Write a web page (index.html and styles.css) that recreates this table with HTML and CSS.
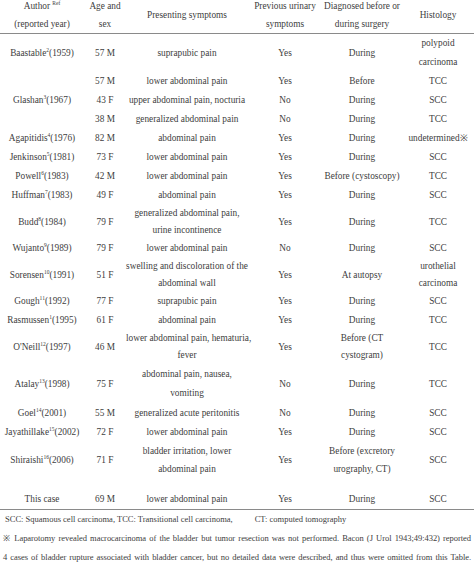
FILE: index.html
```html
<!DOCTYPE html>
<html>
<head>
<meta charset="utf-8">
<link rel="stylesheet" href="styles.css">
</head>
<body>
<div class="page">
<table class="cases">
  <colgroup>
    <col class="c-author"><col class="c-age"><col class="c-sym"><col class="c-prev"><col class="c-diag"><col class="c-hist">
  </colgroup>
  <thead>
    <tr>
      <th>Author <sup>Ref</sup><br>(reported year)</th>
      <th>Age and<br>sex</th>
      <th>Presenting symptoms</th>
      <th>Previous urinary<br>symptoms</th>
      <th>Diagnosed before or<br>during surgery</th>
      <th>Histology</th>
    </tr>
  </thead>
  <tbody>
    <tr class="first"><td>Baastable<sup>2</sup>(1959)</td><td>57 M</td><td>suprapubic pain</td><td>Yes</td><td>During</td><td>polypoid<br>carcinoma</td></tr>
    <tr><td></td><td>57 M</td><td>lower abdominal pain</td><td>Yes</td><td>Before</td><td>TCC</td></tr>
    <tr><td>Glashan<sup>3</sup>(1967)</td><td>43 F</td><td>upper abdominal pain, nocturia</td><td>No</td><td>During</td><td>SCC</td></tr>
    <tr><td></td><td>38 M</td><td>generalized abdominal pain</td><td>No</td><td>During</td><td>TCC</td></tr>
    <tr><td>Agapitidis<sup>4</sup>(1976)</td><td>82 M</td><td>abdominal pain</td><td>Yes</td><td>During</td><td>undetermined※</td></tr>
    <tr><td>Jenkinson<sup>5</sup>(1981)</td><td>73 F</td><td>lower abdominal pain</td><td>Yes</td><td>During</td><td>SCC</td></tr>
    <tr><td>Powell<sup>6</sup>(1983)</td><td>42 M</td><td>lower abdominal pain</td><td>Yes</td><td>Before (cystoscopy)</td><td>TCC</td></tr>
    <tr><td>Huffman<sup>7</sup>(1983)</td><td>49 F</td><td>abdominal pain</td><td>Yes</td><td>During</td><td>SCC</td></tr>
    <tr class="two"><td>Budd<sup>8</sup>(1984)</td><td>79 F</td><td>generalized abdominal pain,<br>urine incontinence</td><td>Yes</td><td>During</td><td>TCC</td></tr>
    <tr><td>Wujanto<sup>9</sup>(1989)</td><td>79 F</td><td>lower abdominal pain</td><td>No</td><td>During</td><td>SCC</td></tr>
    <tr class="two"><td>Sorensen<sup>10</sup>(1991)</td><td>51 F</td><td>swelling and discoloration of the<br>abdominal wall</td><td>Yes</td><td>At autopsy</td><td>urothelial<br>carcinoma</td></tr>
    <tr><td>Gough<sup>11</sup>(1992)</td><td>77 F</td><td>suprapubic pain</td><td>Yes</td><td>During</td><td>SCC</td></tr>
    <tr><td>Rasmussen<sup>1</sup>(1995)</td><td>61 F</td><td>abdominal pain</td><td>Yes</td><td>During</td><td>TCC</td></tr>
    <tr class="two"><td>O'Neill<sup>12</sup>(1997)</td><td>46 M</td><td>lower abdominal pain, hematuria,<br>fever</td><td>Yes</td><td>Before (CT<br>cystogram)</td><td>TCC</td></tr>
    <tr class="two tall"><td>Atalay<sup>13</sup>(1998)</td><td>75 F</td><td>abdominal pain, nausea,<br>vomiting</td><td>No</td><td>During</td><td>TCC</td></tr>
    <tr><td>Goel<sup>14</sup>(2001)</td><td>55 M</td><td>generalized acute peritonitis</td><td>No</td><td>During</td><td>SCC</td></tr>
    <tr><td>Jayathillake<sup>15</sup>(2002)</td><td>72 F</td><td>lower abdominal pain</td><td>Yes</td><td>During</td><td>SCC</td></tr>
    <tr class="two mid"><td>Shiraishi<sup>16</sup>(2006)</td><td>71 F</td><td>bladder irritation, lower<br>abdominal pain</td><td>Yes</td><td>Before (excretory<br>urography, CT)</td><td>SCC</td></tr>
    <tr class="last"><td>This case</td><td>69 M</td><td>lower abdominal pain</td><td>Yes</td><td>During</td><td>SCC</td></tr>
  </tbody>
</table>
<div class="notes">
  <p class="abbr"><span>SCC: Squamous cell carcinoma, TCC: Transitional cell carcinoma,</span><span class="ct">CT: computed tomography</span></p>
  <p class="star">※ Laparotomy revealed macrocarcinoma of the bladder but tumor resection was not performed. Bacon (J Urol 1943;49:432) reported</p>
  <p class="star">4 cases of bladder rupture associated with bladder cancer, but no detailed data were described, and thus were omitted from this Table.</p>
</div>
</div>
</body>
</html>
```
FILE: styles.css
```css
html, body {
  margin: 0;
  padding: 0;
  background: #ffffff;
}
.page {
  width: 474px;
  margin-top: -3px;
  font-family: "Liberation Serif", "Times New Roman", serif;
  font-size: 9.3px;
  color: #404040;
}
.cases {
  width: 474px;
  border-collapse: collapse;
  table-layout: fixed;
}
.c-author { width: 84px; }
.c-age { width: 42px; }
.c-sym { width: 122px; }
.c-prev { width: 74px; }
.c-diag { width: 80px; }
.c-hist { width: 72px; }
.cases th {
  font-weight: normal;
  line-height: 18px;
  padding: 0;
  text-align: center;
  vertical-align: middle;
  white-space: nowrap;
  border-bottom: 1.5px solid #8a8a8a;
}
.cases td {
  line-height: 19px;
  height: 19px;
  padding: 0;
  text-align: center;
  vertical-align: middle;
  white-space: nowrap;
}
.cases tr.two td {
  line-height: 17px;
  height: 34px;
}
.cases tr.two.tall td {
  line-height: 19px;
  height: 40px;
}
.cases tr.two.mid td {
  line-height: 18px;
  height: 36px;
}
.cases tr.last td {
  height: 31px;
  vertical-align: bottom;
  border-bottom: 1.5px solid #8a8a8a;
}
sup {
  font-size: 5.5px;
  line-height: 0;
  vertical-align: 4px;
}
.notes {
  font-size: 8.5px;
}
.notes p {
  margin: 0;
  line-height: 19px;
}
.abbr {
  padding-left: 5px;
  display: flex;
}
.ct {
  margin-left: 22px;
}
.star {
  padding: 0 3px 0 3px;
  letter-spacing: -0.05px;
  white-space: nowrap;
  text-align: justify;
  text-align-last: justify;
}
```
